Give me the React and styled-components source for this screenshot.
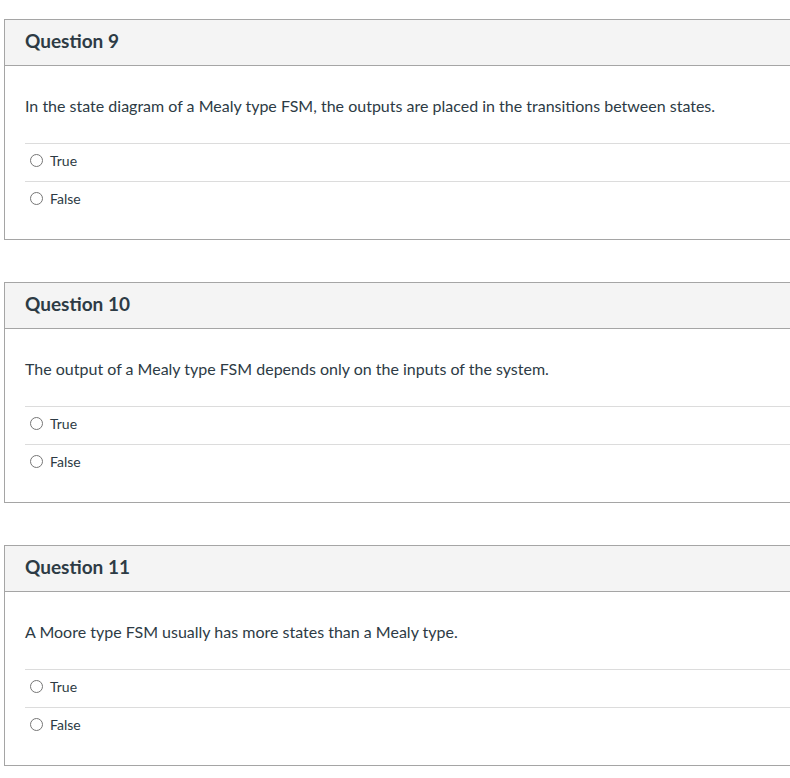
import React from "react";
import styled, { createGlobalStyle } from "styled-components";

const questions = [
  {
    id: 9,
    text: "In the state diagram of a Mealy type FSM, the outputs are placed in the transitions between states.",
  },
  {
    id: 10,
    text: "The output of a Mealy type FSM depends only on the inputs of the system.",
  },
  {
    id: 11,
    text: "A Moore type FSM usually has more states than a Mealy type.",
  },
];

const answers = ["True", "False"];

const App = () => {
  return (
    <>
      <GlobalStyle />
      <Page>
        {questions.map((q) => (
          <Card key={q.id}>
            <Header>
              <Title>Question {q.id}</Title>
            </Header>
            <Body>
              <QuestionText>{q.text}</QuestionText>
              <Options>
                {answers.map((a) => (
                  <Option key={a}>
                    <Radio type="radio" name={`q${q.id}`} />
                    <span>{a}</span>
                  </Option>
                ))}
              </Options>
            </Body>
          </Card>
        ))}
      </Page>
    </>
  );
};

export default App;

const GlobalStyle = createGlobalStyle`
  body {
    margin: 0;
    background: #ffffff;
    font-family: Lato, "Liberation Sans", sans-serif;
    color: #2d3b45;
    overflow: hidden;
  }
`;

const Page = styled.div`
  display: flex;
  flex-direction: column;
  gap: 42px;
  padding: 19px 0 0 4px;
`;

const Card = styled.div`
  border: 1px solid #a5a5a5;
  border-right: none;
  margin-right: -2px;
`;

const Header = styled.div`
  height: 46px;
  display: flex;
  align-items: center;
  padding: 0 20px 4px;
  box-sizing: border-box;
  background: #f4f4f4;
  border-bottom: 1px solid #a5a5a5;
`;

const Title = styled.h2`
  margin: 0;
  font-size: 19px;
  font-weight: 700;
  color: #2d3b45;
`;

const Body = styled.div`
  padding: 0 0 20px 20px;
`;

const QuestionText = styled.p`
  margin: 0;
  height: 77px;
  display: flex;
  align-items: center;
  font-size: 16px;
  padding-top: 2px;
  box-sizing: border-box;
`;

const Options = styled.div`
  display: flex;
  flex-direction: column;
`;

const Option = styled.label`
  display: flex;
  align-items: center;
  gap: 7px;
  height: 38px;
  padding: 0 0 4px 5px;
  border-top: 1px solid #dcdcdc;
  box-sizing: border-box;
  font-size: 14px;
  color: #2d3b45;
`;

const Radio = styled.input`
  appearance: none;
  margin: 0;
  width: 13px;
  height: 13px;
  border: 1px solid #767676;
  border-radius: 50%;
  background: #fff;
`;
